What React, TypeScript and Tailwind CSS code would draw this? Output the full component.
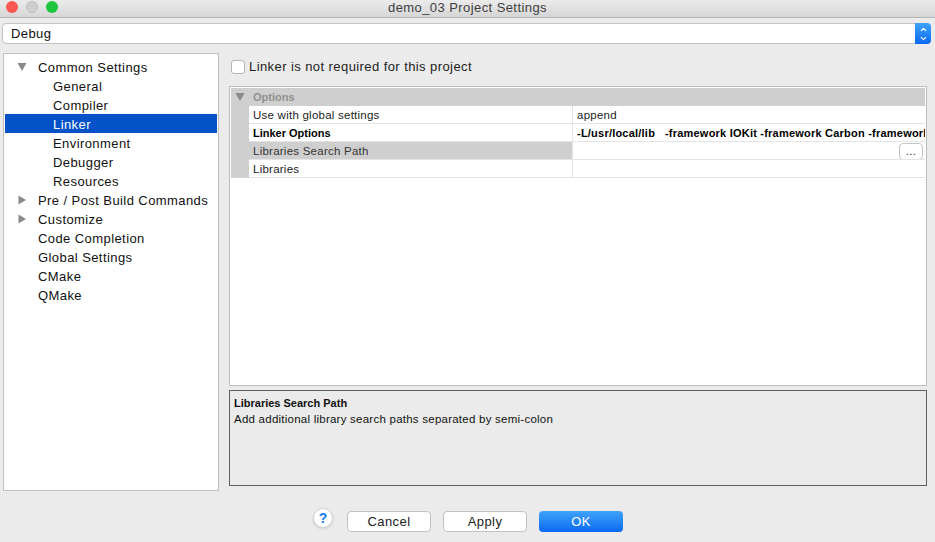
import { ChevronDown, ChevronUp } from "lucide-react";

const tree: { label: string; indent: number; arrow?: "down" | "right"; selected?: boolean }[] = [
  { label: "Common Settings", indent: 0, arrow: "down" },
  { label: "General", indent: 1 },
  { label: "Compiler", indent: 1 },
  { label: "Linker", indent: 1, selected: true },
  { label: "Environment", indent: 1 },
  { label: "Debugger", indent: 1 },
  { label: "Resources", indent: 1 },
  { label: "Pre / Post Build Commands", indent: 0, arrow: "right" },
  { label: "Customize", indent: 0, arrow: "right" },
  { label: "Code Completion", indent: 0 },
  { label: "Global Settings", indent: 0 },
  { label: "CMake", indent: 0 },
  { label: "QMake", indent: 0 },
];

function Arrow({ dir }: { dir: "down" | "right" }) {
  return (
    <svg width="10" height="10" viewBox="0 0 10 10" className="shrink-0">
      {dir === "down" ? <path d="M0.5 1H9.5L5 9Z" fill="#8a8a8a" /> : <path d="M1.5 0.5V9.5L9 5Z" fill="#8a8a8a" />}
    </svg>
  );
}

function Row({ name, value, bold, active, more }: { name: string; value?: string; bold?: boolean; active?: boolean; more?: boolean }) {
  const text = bold ? "font-bold text-black text-[11px]" : "text-[#222] text-[11.5px] tracking-[0.24px]";
  return (
    <div className="flex h-[18px] bg-[#cfcfcf]">
      <div className="w-[18px] shrink-0" />
      <div className={`w-[323px] shrink-0 pl-1 leading-[19px] border-b border-[#e4e4e4] ${text} ${active ? "bg-[#cfcfcf] text-[#333]" : "bg-white"}`}>
        {name}
      </div>
      <div className={`flex flex-1 min-w-0 bg-white border-l border-b border-[#e4e4e4] pl-1 leading-[19px] overflow-hidden whitespace-pre ${text} ${bold ? "tracking-[0.22px]" : ""}`}>
        <span className="flex-1 overflow-hidden">{value}</span>
        {more && (
          <span className="mr-[2px] mt-[1px] flex h-[17px] w-6 items-center justify-center rounded-[4px] border border-[#c4c4c4] bg-white leading-none text-[#333]">
            ...
          </span>
        )}
      </div>
    </div>
  );
}

export default function App() {
  return (
    <div className="flex h-[542px] w-[935px] flex-col overflow-hidden bg-[#ebebeb] text-[13px] tracking-[0.42px] text-black font-['Liberation_Sans',sans-serif]">
      {/* Title bar */}
      <div className="relative flex h-[18px] shrink-0 items-center justify-center border-b border-[#b4b4b4] bg-gradient-to-b from-[#ebebeb] to-[#d6d6d6] pb-[2px] text-[#404040]">
        <div className="absolute left-[6px] top-[1px] flex gap-2">
          <span className="h-3 w-3 rounded-full bg-[#fc5753]" />
          <span className="h-3 w-3 rounded-full bg-[#cfcfcf] border border-[#bdbdbd]" />
          <span className="h-3 w-3 rounded-full bg-[#1ec63f]" />
        </div>
        demo_03 Project Settings
      </div>

      {/* Config select */}
      <div className="ml-[2px] mr-[4px] mt-[5px] flex h-[21px] shrink-0 items-center rounded-[4px] border border-[#c2c2c2] bg-white pl-2 text-[#111]">
        <span className="flex-1">Debug</span>
        <span className="-mr-px flex h-[21px] w-4 flex-col items-center justify-center rounded-r-[4px] bg-gradient-to-b from-[#3fa3fb] to-[#0a68f0] text-white">
          <ChevronUp size={9} strokeWidth={3} />
          <ChevronDown size={9} strokeWidth={3} />
        </span>
      </div>

      <div className="ml-[3px] mr-[8px] mt-[9px] flex shrink-0 gap-[10px]">
        {/* Settings tree */}
        <div className="h-[438px] w-[216px] shrink-0 border border-[#c0c0c0] bg-white px-[1px] pt-[3px]">
          {tree.map((t) => (
            <div key={t.label} className={`flex h-[19px] items-center whitespace-nowrap ${t.selected ? "bg-[#0451c8] text-white" : "text-[#111]"}`}>
              <span className="flex w-[33px] shrink-0 justify-center">{t.arrow && <Arrow dir={t.arrow} />}</span>
              <span className={`pt-[2px] ${t.indent ? "pl-[15px]" : ""}`}>{t.label}</span>
            </div>
          ))}
        </div>

        {/* Linker page */}
        <div className="flex w-[698px] shrink-0 flex-col">
          <div className="flex h-[28px] items-center gap-[4px] pl-[2px] pb-[1px] text-[#222]">
            <span className="h-[14px] w-[14px] rounded-[3px] border border-[#b5b5b5] bg-white" />
            Linker is not required for this project
          </div>

          <div className="mt-[5px] h-[300px] border border-[#bdbdbd] bg-white p-[1px] text-[11px] tracking-normal">
            <div className="flex h-[18px] items-center bg-[#cfcfcf] font-bold text-[#8f8f8f]">
              <span className="flex w-[22px] shrink-0 justify-center pr-[4px]"><Arrow dir="down" /></span>
              Options
            </div>
            <Row name="Use with global settings" value="append" />
            <Row name="Linker Options" value="-L/usr/local/lib   -framework IOKit -framework Carbon -framework" bold />
            <Row name="Libraries Search Path" active more />
            <Row name="Libraries" />
          </div>

          <div className="mt-[4px] h-[96px] border border-[#5e5e5e] px-1 pt-[4px] text-[11px] leading-[16px] tracking-normal text-[#111]">
            <div className="font-bold">Libraries Search Path</div>
            <div className="text-[11.5px] tracking-[0.24px]">Add additional library search paths separated by semi-colon</div>
          </div>
        </div>
      </div>

      {/* Dialog buttons */}
      <div className="ml-[313px] mt-[17px] flex shrink-0 items-center">
        <span className="mb-[6px] flex h-[20px] w-[20px] items-center justify-center rounded-full border border-[#d0d0d0] bg-white text-[14px] font-bold tracking-normal text-[#1a7cf0] shadow-sm">?</span>
        <span className="ml-[14px] flex h-[21px] w-[84px] items-center justify-center rounded-[4px] border border-[#c2c2c2] bg-white pt-[1px] text-[#222]">Cancel</span>
        <span className="ml-[12px] flex h-[21px] w-[84px] items-center justify-center rounded-[4px] border border-[#c2c2c2] bg-white pt-[1px] text-[#222]">Apply</span>
        <span className="ml-[12px] flex h-[21px] w-[84px] items-center justify-center rounded-[4px] bg-gradient-to-b from-[#3fa3fb] to-[#0a68f0] pt-[1px] text-white">OK</span>
      </div>
    </div>
  );
}
